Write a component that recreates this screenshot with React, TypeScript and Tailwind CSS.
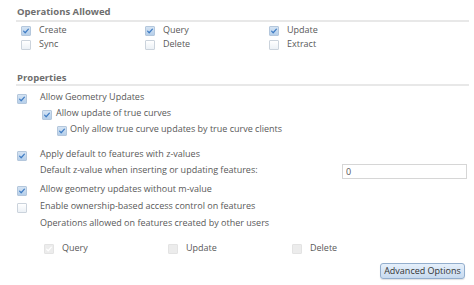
import React from 'react';

type BoxProps = { checked?: boolean; disabled?: boolean; className?: string };

const Box = ({ checked = false, disabled = false, className = '' }: BoxProps) => {
  const look = disabled
    ? 'border-[#e3e3e3] bg-[#ececec]'
    : checked
      ? 'border-[#b4c7dc] bg-gradient-to-b from-[#d4e3f3] to-[#b6cfea]'
      : 'border-[#cbd3dc] bg-gradient-to-b from-[#ffffff] to-[#ecf1f6]';
  return (
    <span className={`flex w-[10px] h-[10px] shrink-0 items-center justify-center border rounded-[1px] ${look} ${className}`}>
      {checked && (
        <svg viewBox="0 0 10 10" className="w-[8px] h-[8px]">
          <path
            d="M2 5.2 L4 7.2 L8 2.6"
            fill="none"
            stroke={disabled ? '#ffffff' : '#3f7cc4'}
            strokeWidth="1.5"
            strokeLinecap="round"
            strokeLinejoin="round"
          />
        </svg>
      )}
    </span>
  );
};

const Heading = ({ title, className = '' }: { title: string; className?: string }) => (
  <div className={`pl-[1px] leading-[12px] text-[9.5px] font-bold text-[#6e6e6e] border-b-2 border-[#e8e8e8] ${className}`}>
    {title}
  </div>
);

const Check = ({ label, checked, disabled }: { label: string; checked?: boolean; disabled?: boolean }) => (
  <div className="flex items-center gap-[8px]">
    <Box checked={checked} disabled={disabled} className="mt-[2px]" />
    <span>{label}</span>
  </div>
);

export default function App() {
  return (
    <div
      className="w-[474px] h-[285px] overflow-hidden bg-white pl-[16px] pr-[5px] text-[9px] text-[#595959]"
      style={{ fontFamily: '"Open Sans", "Liberation Sans", sans-serif' }}
    >
      <Heading title="Operations Allowed" className="mt-[6px] pb-[2px]" />
      <div className="grid grid-cols-[124px_124px_124px] pl-[5px]">
        <div className="h-[15px] flex items-center"><Check label="Create" checked /></div>
        <div className="h-[15px] flex items-center"><Check label="Query" checked /></div>
        <div className="h-[15px] flex items-center"><Check label="Update" checked /></div>
        <div className="h-[14px] flex items-center"><Check label="Sync" /></div>
        <div className="h-[14px] flex items-center"><Check label="Delete" /></div>
        <div className="h-[14px] flex items-center"><Check label="Extract" /></div>
      </div>

      <Heading title="Properties" className="mt-[21px] leading-[11px]" />
      <div className="flex flex-col">
        <div className="mt-[3px] h-[16px] flex items-center gap-[13px] pl-[1px]">
          <Box checked className="mt-[3px]" />
          <span>Allow Geometry Updates</span>
        </div>
        <div className="h-[16px] flex items-center gap-[4px] pl-[26px]">
          <Box checked className="mt-[3px]" />
          <span>Allow update of true curves</span>
        </div>
        <div className="h-[16px] flex items-center gap-[3px] pl-[41px]">
          <Box checked className="mt-[3px]" />
          <span>Only allow true curve updates by true curve clients</span>
        </div>
        <div className="mt-[9px] h-[16px] flex items-center gap-[13px] pl-[1px]">
          <Box checked className="mt-[3px]" />
          <span>Apply default to features with z-values</span>
        </div>
        <div className="h-[16px] flex items-center justify-between pl-[24px]">
          <span>Default z-value when inserting or updating features:</span>
          <input
            defaultValue="0"
            className="mt-[3px] mr-[2px] w-[125px] h-[15px] border border-[#d6d6d6] px-[3px] text-[9px] text-[#555555] outline-none"
          />
        </div>
        <div className="mt-[3px] h-[16px] flex items-center gap-[13px] pl-[1px]">
          <Box checked className="mt-[3px]" />
          <span>Allow geometry updates without m-value</span>
        </div>
        <div className="mt-[1px] h-[16px] flex items-center gap-[13px] pl-[1px]">
          <Box className="mt-[3px]" />
          <span>Enable ownership-based access control on features</span>
        </div>
        <div className="mt-[1px] h-[16px] flex items-center pl-[24px]">
          <span>Operations allowed on features created by other users</span>
        </div>
        <div className="mt-[9px] h-[16px] grid grid-cols-[124px_124px_124px] items-center pl-[28px]">
          <Check label="Query" checked disabled />
          <Check label="Update" disabled />
          <Check label="Delete" disabled />
        </div>
        <div className="mt-[7px] flex justify-end pr-[4px]">
          <button className="h-[16px] w-[85px] rounded-[3px] border border-[#93aecd] bg-gradient-to-b from-[#e6f0fb] to-[#c7daef] text-[9px] leading-[14px] text-[#333333] shadow-[0_1px_1px_rgba(0,0,0,0.12)]">
            Advanced Options
          </button>
        </div>
      </div>
    </div>
  );
}
